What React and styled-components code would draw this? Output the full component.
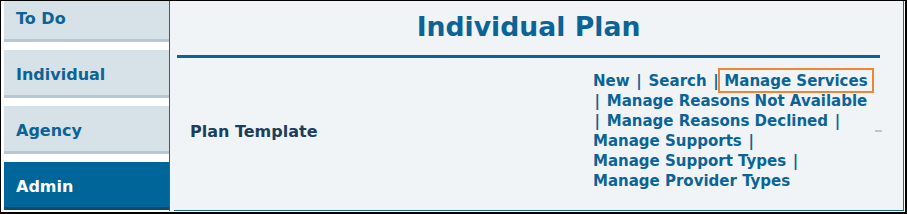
import React from "react";
import styled, { createGlobalStyle } from "styled-components";

const GlobalStyle = createGlobalStyle`
  body {
    margin: 0;
    background: #fff;
    font-family: "DejaVu Sans", Verdana, sans-serif;
  }
`;

const Frame = styled.div`
  width: 907px;
  height: 214px;
  box-sizing: border-box;
  border-style: solid;
  border-color: #000;
  border-width: 1px 2px 2px 1px;
  overflow: hidden;
  background: #fff;
`;

// page is scrolled a few pixels down in the reference
const Page = styled.div`
  display: flex;
  align-items: stretch;
  margin-top: -7px;
`;

const Sidebar = styled.nav`
  display: flex;
  flex-direction: column;
  gap: 8px;
  width: 165px;
  padding-left: 3px;
  flex-shrink: 0;
`;

const Tab = styled.a`
  display: block;
  height: 30px;
  padding: 15px 0 0 12px;
  line-height: 19px;
  font-size: 16px;
  font-weight: bold;
  text-decoration: none;
  background: ${(p) => (p.$active ? "#006699" : "#d7e1e8")};
  border-bottom: 3px solid ${(p) => (p.$active ? "#0a4a6b" : "#b7c7d3")};
  color: ${(p) => (p.$active ? "#fff" : "#0b6396")};
`;

const Main = styled.main`
  flex: 1;
  display: flex;
  margin-right: 1px;
  padding-left: 4px;
  border-left: 1px solid #1b6797;
  background: #f0f4f7;
`;

const Box = styled.section`
  flex: 1;
  padding-top: 17px;
  border-right: 1px solid #1b6797;
  border-bottom: 1px solid #1b6797;
`;

const Title = styled.h1`
  margin: 0 23px 0 3px;
  padding-bottom: 12px;
  border-bottom: 3px solid #0b6396;
  text-align: center;
  font-size: 26.67px;
  line-height: 32px;
  font-weight: bold;
  color: #0b6396;
`;

const Row = styled.div`
  display: grid;
  grid-template-columns: 403px 282px 7px;
  align-items: center;
  padding: 13px 0 19px 16px;
`;

const Label = styled.div`
  font-size: 16px;
  line-height: 19px;
  font-weight: bold;
  color: #1c3e5c;
`;

const Links = styled.div`
  font-size: 15px;
  line-height: 20px;
  font-weight: bold;
  color: #0b6396;
  white-space: nowrap;
`;

const Link = styled.a`
  color: #0b6396;
  text-decoration: none;
  ${(p) =>
    p.$focused &&
    `
    padding: 2px 4px 1px;
    outline: 2px solid #ef8633;
    outline-offset: 0;
  `}
`;

const Sep = styled.span`
  margin: 0 1.5px;
`;

const Dash = styled.span`
  display: block;
  width: 7px;
  height: 2px;
  background: #b7c8d5;
`;

export default function App() {
  return (
    <>
      <GlobalStyle />
      <Frame>
        <Page>
          <Sidebar>
            <Tab href="#">To Do</Tab>
            <Tab href="#">Individual</Tab>
            <Tab href="#">Agency</Tab>
            <Tab href="#" $active>
              Admin
            </Tab>
          </Sidebar>
          <Main>
            <Box>
              <Title>Individual Plan</Title>
              <Row>
                <Label>Plan Template</Label>
                <Links>
                  <Link href="#">New</Link> <Sep>|</Sep> <Link href="#">Search</Link> <Sep>|</Sep>
                  <Link href="#" $focused>
                    Manage Services
                  </Link>
                  <br />
                  <Sep>|</Sep> <Link href="#">Manage Reasons Not Available</Link>
                  <br />
                  <Sep>|</Sep> <Link href="#">Manage Reasons Declined</Link> <Sep>|</Sep>
                  <br />
                  <Link href="#">Manage Supports</Link> <Sep>|</Sep>
                  <br />
                  <Link href="#">Manage Support Types</Link> <Sep>|</Sep>
                  <br />
                  <Link href="#">Manage Provider Types</Link>
                </Links>
                <Dash />
              </Row>
            </Box>
          </Main>
        </Page>
      </Frame>
    </>
  );
}
